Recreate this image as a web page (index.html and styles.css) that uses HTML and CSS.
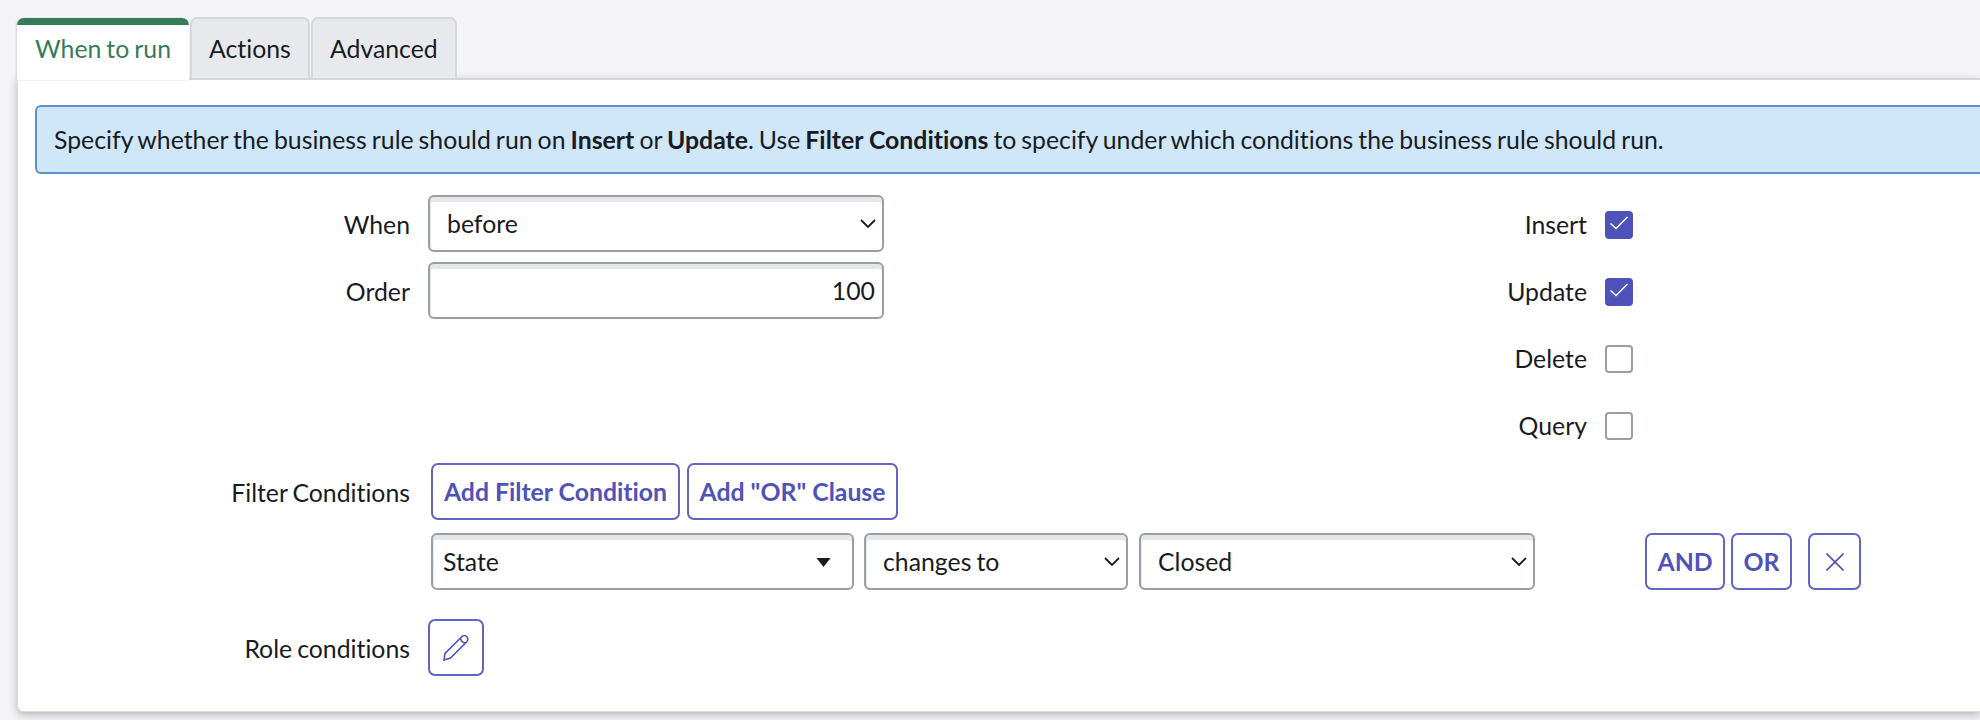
FILE: index.html
```
<!DOCTYPE html>
<html lang="en">
<head>
  <meta charset="utf-8">
  <title>Business Rule</title>
  <link rel="stylesheet" href="styles.css">
</head>
<body>
<div class="tabs">
  <a class="tab active">When to run</a>
  <a class="tab actions">Actions</a>
  <a class="tab advanced">Advanced</a>
</div>
<form class="panel">
  <div class="info">Specify whether the business rule should run on <b>Insert</b> or <b>Update</b>. Use <b>Filter Conditions</b> to specify under which conditions the business rule should run.</div>

  <div class="columns">
    <div class="column">
      <div class="row">
        <label for="when">When</label>
        <div class="field">
          <select id="when"><option>before</option></select>
          <svg class="chevron" width="16" height="10" viewBox="0 0 16 10"><path d="M1 1l7 7 7-7"/></svg>
        </div>
      </div>
      <div class="row">
        <label for="order">Order</label>
        <div class="field"><input id="order" type="text" value="100"></div>
      </div>
    </div>
    <div class="column checks">
      <div class="row"><label>Insert</label><span class="check checked"><svg width="18" height="14" viewBox="0 0 18 14"><path d="M.5 7.500L6 12.500 17.500 1"/></svg></span></div>
      <div class="row"><label>Update</label><span class="check checked"><svg width="18" height="14" viewBox="0 0 18 14"><path d="M.5 7.500L6 12.500 17.500 1"/></svg></span></div>
      <div class="row"><label>Delete</label><span class="check"></span></div>
      <div class="row"><label>Query</label><span class="check"></span></div>
    </div>
  </div>

  <div class="row filter">
    <label>Filter Conditions</label>
    <button type="button" class="btn add-filter">Add Filter Condition</button>
    <button type="button" class="btn add-or">Add "OR" Clause</button>
  </div>
  <div class="condition">
    <div class="field state">
      <span>State</span>
      <svg width="15" height="9" viewBox="0 0 14 9"><path d="M0 0h14L7 9z"/></svg>
    </div>
    <div class="field operator">
      <select><option>changes to</option></select>
      <svg class="chevron" width="16" height="10" viewBox="0 0 16 10"><path d="M1 1l7 7 7-7"/></svg>
    </div>
    <div class="field value">
      <select><option>Closed</option></select>
      <svg class="chevron" width="16" height="10" viewBox="0 0 16 10"><path d="M1 1l7 7 7-7"/></svg>
    </div>
    <button type="button" class="btn and">AND</button>
    <button type="button" class="btn or">OR</button>
    <button type="button" class="btn remove"><svg width="18" height="18" viewBox="0 0 18 18"><path d="M.5.5l17 17M17.500.5l-17 17"/></svg></button>
  </div>

  <div class="row roles">
    <label>Role conditions</label>
    <button type="button" class="btn edit"><svg width="26" height="26" viewBox="0 0 26 26"><path d="M1 25l1-6.500L18.500 2a3.200 3.200 0 0 1 5.500 4.500L7.500 23zM17.500 3c.3 3 2 4.700 5 5"/></svg></button>
  </div>
</form>
</body>
</html>
```
FILE: styles.css
```
* {
  box-sizing: border-box;
}

body {
  margin: 0;
  height: 720px;
  padding: 17px 0 0 17px;
  overflow: hidden;
  background: #f5f5f7;
  color: #181b23;
  font-family: Lato, sans-serif;
  font-size: 24.8px;
  font-variant-ligatures: none;
  line-height: 30px;
  word-spacing: -1.3px;
}

.tabs {
  display: flex;
  height: 61px;
}

.tab {
  height: 61px;
  padding: 15px 0 0 17px;
  border: 2px solid #d6d8dd;
  border-bottom: 0;
  border-radius: 7px 7px 0 0;
  background: #e8e9ed;
  white-space: nowrap;
}

.tab.active {
  position: relative;
  z-index: 1;
  width: 172px;
  height: 62px;
  margin: 1px 1px 0 0;
  padding: 9px 0 0 18px;
  border: 0;
  border-top: 7px solid #367c5b;
  background: #fff;
  color: #367c5b;
  box-shadow: -1px 0 2px #d0d1d8;
}

.tab.actions {
  width: 120px;
  margin-right: 1px;
}

.tab.advanced {
  width: 146px;
}

/* runs off the right edge, so nothing is closed on that side */
.panel {
  height: 634px;
  padding: 25px 0 0 17px;
  border: 1px solid #d8d9df;
  border-top: 2px solid #d4d6da;
  border-right: 0;
  border-radius: 0 0 0 6px;
  background: #fff;
  box-shadow: 0 3px 8px rgba(60, 62, 75, 0.35);
}

.info {
  height: 69px;
  padding: 18px 0 0 17px;
  border: 2px solid #5b93c4;
  border-right: 0;
  border-radius: 6px 0 0 6px;
  background: #d0e7fa;
  white-space: nowrap;
}

.info b {
  word-spacing: 0;
}

.columns {
  display: flex;
  height: 268px;
  margin-top: 16px;
}

.column {
  flex: none;
  width: 1177px;
}

.column.checks {
  width: 700px;
}

.row {
  display: flex;
  align-items: center;
  height: 67px;
}

.row label {
  width: 375px;
  margin-right: 18px;
  padding-top: 2px;
  text-align: right;
}

.field {
  display: flex;
  align-items: center;
  width: 456px;
  height: 57px;
  padding: 0 6px 0 17px;
  border: 2px solid #9a9dab;
  border-radius: 6px;
  background: #fff;
  box-shadow: inset 0 5px #e6e8e7, inset 1px 0 1px #e6e8e7;
}

.field select,
.field input {
  flex: 1;
  min-width: 0;
  padding: 1px 0 0;
  border: 0;
  outline: 0;
  background: none;
  color: inherit;
  font: inherit;
  word-spacing: inherit;
  appearance: none;
}

.field input {
  padding-right: 1px;
  text-align: right;
}

svg {
  flex: none;
  fill: none;
  stroke: currentColor;
}

.chevron {
  stroke-width: 1.8;
}

.check {
  display: flex;
  align-items: center;
  justify-content: center;
  width: 28px;
  height: 28px;
  margin-top: 2px;
  border: 2px solid #9a9dab;
  border-radius: 4px;
}

.check.checked {
  padding-bottom: 3px;
  border-color: #4f52b8;
  background: #4f52b8;
  color: #fff;
  stroke-width: 1.4;
}

.btn {
  height: 57px;
  padding: 0;
  border: 2px solid #6265c4;
  border-radius: 7px;
  background: #fff;
  color: #4f52b8;
  font: inherit;
  font-weight: bold;
  white-space: nowrap;
}

.filter label {
  margin-right: 21px;
}

.add-filter {
  width: 249px;
  margin-right: 7px;
}

.add-or {
  width: 211px;
}

.condition {
  display: flex;
  margin: 8px 0 0 396px;
}

.field.state {
  justify-content: space-between;
  width: 423px;
  margin-right: 10px;
  padding: 1px 21px 0 10px;
}

.state svg {
  fill: currentColor;
  stroke: none;
}

.field.operator {
  width: 264px;
  margin-right: 11px;
}

.field.value {
  width: 396px;
  margin-right: 110px;
}

.and {
  width: 80px;
  margin-right: 6px;
}

.or {
  width: 61px;
  margin-right: 16px;
}

.remove {
  width: 53px;
}

.remove svg,
.edit svg {
  display: block;
  margin: 0 auto;
  stroke-width: 1.6;
}

.roles {
  margin-top: 24px;
}

.edit {
  width: 56px;
}
```
